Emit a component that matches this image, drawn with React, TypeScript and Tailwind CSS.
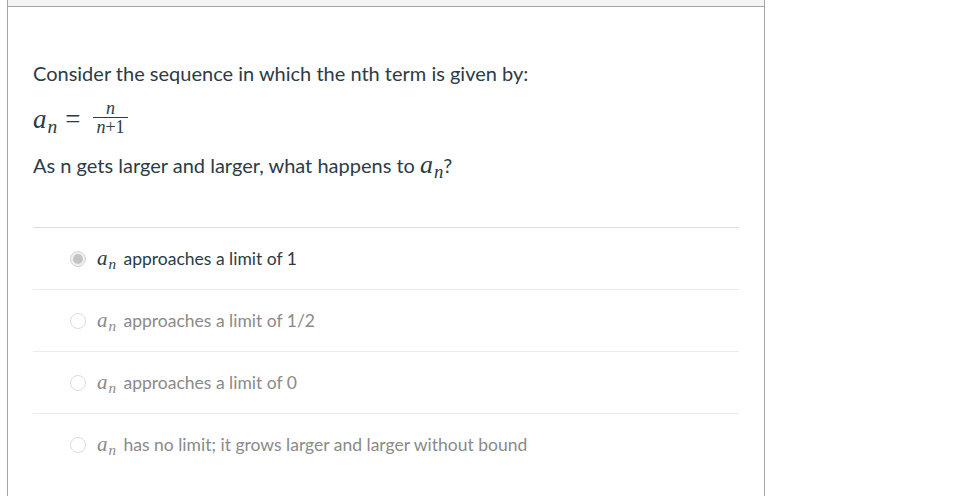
import React from "react";

const An = ({ className = "" }: { className?: string }) => (
  <span className={`font-['Liberation_Serif',serif] italic font-normal whitespace-nowrap ${className}`}>
    a<sub className="text-[0.72em] italic ml-[1px]">n</sub>
  </span>
);

const Radio = ({ checked }: { checked: boolean }) =>
  checked ? (
    <span className="w-4 h-4 rounded-full border border-[#d4d4d4] bg-[#f0f0f0] flex items-center justify-center shrink-0">
      <span className="w-[10px] h-[10px] rounded-full bg-[#c4c4c4]" />
    </span>
  ) : (
    <span className="w-4 h-4 rounded-full border border-[#dcdcdc] bg-white shrink-0" />
  );

const App = () => {
  const answers = [
    { text: "approaches a limit of 1", checked: true },
    { text: "approaches a limit of 1/2", checked: false },
    { text: "approaches a limit of 0", checked: false },
    { text: "has no limit; it grows larger and larger without bound", checked: false },
  ];

  return (
    <div className="w-[976px] h-[496px] bg-white overflow-hidden font-['Lato','Liberation_Sans',sans-serif]">
      <div className="ml-[7px] w-[758px] h-[496px] border-x border-[#a5a5a5]">
        <div className="h-[7px] bg-[#f4f4f4] border-b border-[#a5a5a5]" />
        <div className="px-[25px] pt-[52px]">
          <p className="text-[20px] leading-[28px] text-[#2d3b45]">
            Consider the sequence in which the nth term is given by:
          </p>

          <div className="mt-[14px] flex items-center h-[36px] text-[#2d3b45] font-['Liberation_Serif',serif]">
            <An className="text-[27px]" />
            <span className="ml-[8px] text-[27px] leading-none">=</span>
            <span className="ml-[13px] inline-flex flex-col items-center italic text-[18px] leading-[17px] -mt-[2px]">
              <span className="px-[2px]">n</span>
              <span className="border-t border-[#2d3b45] px-[3px] pt-[1px]">
                n<span className="not-italic">+1</span>
              </span>
            </span>
          </div>

          <p className="mt-[14px] text-[20px] leading-[28px] text-[#2d3b45]">
            As n gets larger and larger, what happens to{" "}
            <An className="text-[26px]" />?
          </p>

          <div className="mt-[48px] border-t border-[#dcdcdc]">
            {answers.map((a, i) => (
              <div
                key={i}
                className={`h-[62px] flex items-center pl-[37px] ${
                  i < answers.length - 1 ? "border-b border-[#ececec]" : ""
                }`}
              >
                <Radio checked={a.checked} />
                <span
                  className={`ml-[11px] text-[17.5px] ${
                    a.checked ? "text-[#2d3b45]" : "text-[#8a8a8a]"
                  }`}
                >
                  <An className="text-[21px] mr-[3px]" /> {a.text}
                </span>
              </div>
            ))}
          </div>
        </div>
      </div>
    </div>
  );
};

export default App;
